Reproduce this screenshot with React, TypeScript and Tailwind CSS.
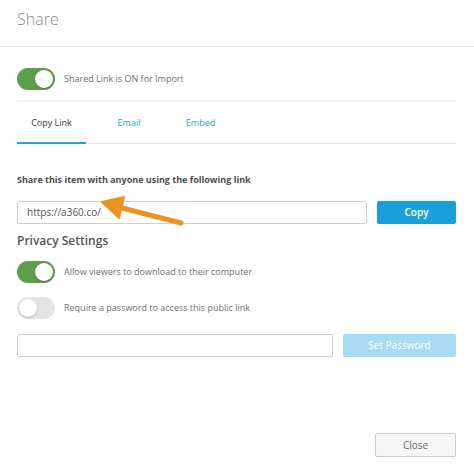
import React from "react";

function Toggle({ on }: { on: boolean }) {
  return (
    <div
      className={
        on
          ? "relative h-[22px] w-[38px] shrink-0 rounded-full bg-[#5c9f48]"
          : "relative h-[22px] w-[38px] shrink-0 rounded-full bg-[#e4e4e4]"
      }
    >
      <div
        className={
          on
            ? "absolute right-[2px] top-[2px] h-[18px] w-[18px] rounded-full bg-white shadow-[0_1px_2px_rgba(0,0,0,0.2)]"
            : "absolute left-[2px] top-[2px] h-[18px] w-[18px] rounded-full bg-white shadow-[0_1px_2px_rgba(0,0,0,0.2)]"
        }
      />
    </div>
  );
}

export default function App() {
  return (
    <div
      className="relative h-[467px] w-[474px] overflow-hidden bg-white text-[#6f6f6f]"
      style={{ fontFamily: '"Open Sans", "Liberation Sans", sans-serif' }}
    >
      <div className="h-[47px] border-b border-[#e2e2e2] pl-[17px] pt-[7px]">
        <div className="text-[16px] font-light leading-[24px] text-[#8a8a8a]">Share</div>
      </div>

      <div className="pl-[17px] pr-[18px]">
        <div className="mt-[21px] flex h-[22px] items-center gap-[9px]">
          <Toggle on={true} />
          <span className="text-[9px]">Shared Link is ON for Import</span>
        </div>

        <div className="mt-[10px] border-t-2 border-[#f0f0f0]" />

        <div className="flex h-[42px] border-b border-[#e4e4e4]">
          <div className="relative flex w-[69px] items-center justify-center text-[9px] text-[#3a3a3a]">
            Copy Link
            <div className="absolute bottom-[-1px] left-0 right-0 h-[2px] bg-[#2aa3d9]" />
          </div>
          <div className="flex w-[86px] items-center justify-center text-[9px] text-[#2aa3d9]">Email</div>
          <div className="flex w-[57px] items-center justify-center text-[9px] text-[#2aa3d9]">Embed</div>
        </div>

        <div className="mt-[29px] text-[9px] font-bold leading-[14px] text-[#4c4c4c]">
          Share this item with anyone using the following link
        </div>

        <div className="mt-[14px] flex h-[23px] gap-[10px]">
          <div className="relative flex flex-1 items-center rounded-[2px] border border-[#cfcfcf] pl-[9px] text-[10px] text-[#555]">
            https://a360.co/
            <svg
              className="absolute left-[80px] top-[-10px]"
              width="90"
              height="40"
              viewBox="0 0 90 40"
            >
              <line x1="20" y1="15" x2="83" y2="31" stroke="#ea9320" strokeWidth="5" strokeLinecap="round" />
              <polygon points="4,10 26,5 21,26" fill="#ea9320" stroke="#ea9320" strokeWidth="2" strokeLinejoin="round" />
            </svg>
          </div>
          <div className="flex w-[79px] items-center justify-center rounded-[2px] bg-[#1b9fd9] text-[10px] font-semibold text-white">
            Copy
          </div>
        </div>

        <div className="mt-[8px] text-[12px] font-semibold leading-[18px] text-[#555]">Privacy Settings</div>

        <div className="mt-[11px] flex h-[22px] items-center gap-[9px]">
          <Toggle on={true} />
          <span className="text-[9px]">Allow viewers to download to their computer</span>
        </div>

        <div className="mt-[14px] flex h-[22px] items-center gap-[9px]">
          <Toggle on={false} />
          <span className="text-[9px]">Require a password to access this public link</span>
        </div>

        <div className="mt-[15px] flex h-[23px] gap-[10px]">
          <div className="w-[316px] rounded-[2px] border border-[#cfcfcf]" />
          <div className="flex flex-1 items-center justify-center rounded-[2px] bg-[#a8dbf1] text-[10px] text-white">
            Set Password
          </div>
        </div>

        <div className="mt-[76px] flex justify-end">
          <div className="flex h-[24px] w-[81px] items-center justify-center rounded-[2px] border border-[#cccccc] bg-[#f6f6f6] text-[10px] text-[#666]">
            Close
          </div>
        </div>
      </div>
    </div>
  );
}
